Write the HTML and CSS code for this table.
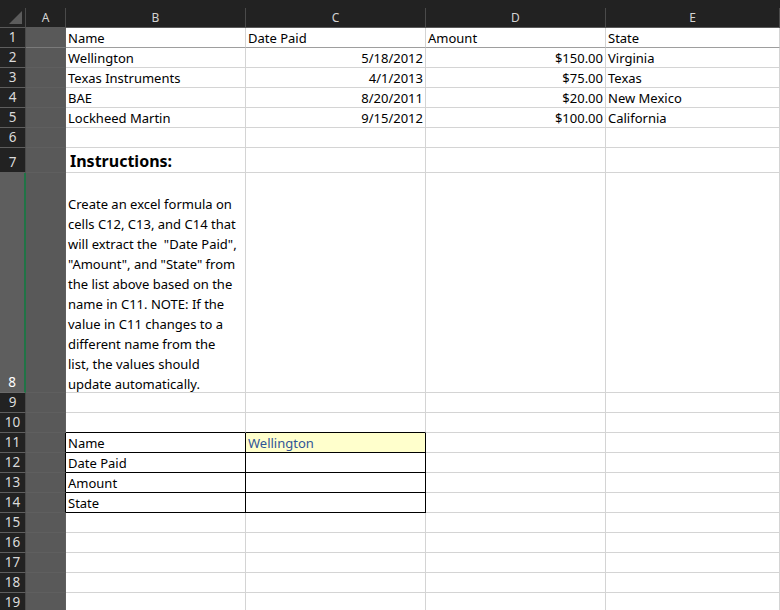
FILE: index.html
```html
<!DOCTYPE html>
<html>
<head>
<meta charset="utf-8">
<link rel="stylesheet" href="styles.css">
</head>
<body>
<div class="topbar"></div>
<div class="grid">
  <div class="corner"><span class="tri"></span></div>
  <div class="ch">A</div><div class="ch">B</div><div class="ch">C</div><div class="ch">D</div><div class="ch">E</div>

  <div class="rh">1</div><div class="ca fz"></div><div class="c fz">Name</div><div class="c fz">Date Paid</div><div class="c fz">Amount</div><div class="c fz">State</div>
  <div class="rh">2</div><div class="ca"></div><div class="c">Wellington</div><div class="c r">5/18/2012</div><div class="c r">$150.00</div><div class="c">Virginia</div>
  <div class="rh">3</div><div class="ca"></div><div class="c">Texas Instruments</div><div class="c r">4/1/2013</div><div class="c r">$75.00</div><div class="c">Texas</div>
  <div class="rh">4</div><div class="ca"></div><div class="c">BAE</div><div class="c r">8/20/2011</div><div class="c r">$20.00</div><div class="c">New Mexico</div>
  <div class="rh">5</div><div class="ca"></div><div class="c">Lockheed Martin</div><div class="c r">9/15/2012</div><div class="c r">$100.00</div><div class="c">California</div>
  <div class="rh">6</div><div class="ca"></div><div class="c"></div><div class="c"></div><div class="c"></div><div class="c"></div>
  <div class="rh">7</div><div class="ca"></div><div class="c head">Instructions:</div><div class="c"></div><div class="c"></div><div class="c"></div>
  <div class="rh sel">8</div><div class="ca"></div>
  <div class="c wrap">Create an excel formula on<br>cells C12, C13, and C14 that<br>will extract the&nbsp; "Date Paid",<br>"Amount", and "State" from<br>the list above based on the<br>name in C11. NOTE: If the<br>value in C11 changes to a<br>different name from the<br>list, the values should<br>update automatically.</div>
  <div class="c"></div><div class="c"></div><div class="c"></div>
  <div class="rh">9</div><div class="ca"></div><div class="c"></div><div class="c"></div><div class="c"></div><div class="c"></div>
  <div class="rh">10</div><div class="ca"></div><div class="c kb"></div><div class="c kb"></div><div class="c"></div><div class="c"></div>
  <div class="rh">11</div><div class="ca kr"></div><div class="c k">Name</div><div class="c k yel">Wellington</div><div class="c"></div><div class="c"></div>
  <div class="rh">12</div><div class="ca kr"></div><div class="c k">Date Paid</div><div class="c k"></div><div class="c"></div><div class="c"></div>
  <div class="rh">13</div><div class="ca kr"></div><div class="c k">Amount</div><div class="c k"></div><div class="c"></div><div class="c"></div>
  <div class="rh">14</div><div class="ca kr"></div><div class="c k">State</div><div class="c k"></div><div class="c"></div><div class="c"></div>
  <div class="rh">15</div><div class="ca"></div><div class="c"></div><div class="c"></div><div class="c"></div><div class="c"></div>
  <div class="rh">16</div><div class="ca"></div><div class="c"></div><div class="c"></div><div class="c"></div><div class="c"></div>
  <div class="rh">17</div><div class="ca"></div><div class="c"></div><div class="c"></div><div class="c"></div><div class="c"></div>
  <div class="rh">18</div><div class="ca"></div><div class="c"></div><div class="c"></div><div class="c"></div><div class="c"></div>
  <div class="rh">19</div><div class="ca"></div><div class="c"></div><div class="c"></div><div class="c"></div><div class="c"></div>
</div>
</body>
</html>
```

FILE: styles.css
```css
html, body {
  margin: 0;
  padding: 0;
  background: #ffffff;
  overflow: hidden;
  width: 780px;
  height: 610px;
}
body {
  font-family: "Noto Sans", "Open Sans", sans-serif;
  font-size: 13px;
  color: #000;
}
.topbar {
  height: 8px;
  background: #222222;
}
.grid {
  display: grid;
  grid-template-columns: 26px 40px 180px 180px 180px 174px;
  grid-template-rows: 20px repeat(6, 20px) 25px 220px repeat(11, 20px);
}
.grid > div {
  box-sizing: border-box;
  overflow: hidden;
  white-space: nowrap;
}
.corner {
  background: #222222;
  border-right: 1px solid #4a4a4a;
  border-bottom: 1px solid #5a5a5a;
  position: relative;
}
.tri {
  position: absolute;
  right: 3px;
  bottom: 3px;
  width: 0;
  height: 0;
  border-left: 13px solid transparent;
  border-bottom: 13px solid #5c5c5c;
}
.ch {
  background: #222222;
  color: #d4d4d4;
  border-right: 1px solid #4a4a4a;
  border-bottom: 1px solid #5a5a5a;
  display: flex;
  align-items: center;
  justify-content: center;
  font-size: 12px;
  padding-bottom: 1px;
}
.rh {
  background: #222222;
  color: #dadada;
  border-right: 1px solid #4a4a4a;
  border-bottom: 1px solid #5e5e5e;
  display: flex;
  align-items: flex-end;
  justify-content: center;
  padding-bottom: 0;
  font-size: 13.5px;
  line-height: 19px;
}
.rh.sel {
  background: #5e5e5e;
  color: #ffffff;
  border-right: 2px solid #217346;
  border-bottom: 1px solid #6a6a6a;
}
.ca {
  background: #595959;
  border-right: 1px solid #5f5f5f;
  border-bottom: 1px solid #5f5f5f;
}
.c {
  border-right: 1px solid #d4d4d4;
  border-bottom: 1px solid #d4d4d4;
  padding: 0 2px 0 2px;
  display: flex;
  align-items: flex-end;
  line-height: 17px;
}
.c.r {
  justify-content: flex-end;
}
.fz {
  border-bottom: 1px solid #9e9e9e;
}
.ca.fz {
  border-bottom: 1px solid #7a7a7a;
}
.head {
  font-weight: bold;
  font-size: 16px;
  padding-left: 4px;
  padding-bottom: 0;
  line-height: 21px;
}
.wrap {
  white-space: normal;
  display: block;
  padding-top: 21px;
  line-height: 20px;
  font-size: 13px;
}
.kb {
  border-bottom: 1px solid #000;
}
.kr {
  border-right: 1px solid #000;
}
.k {
  border-right: 1px solid #000;
  border-bottom: 1px solid #000;
}
.yel {
  background: #ffffcc;
  color: #2f5597;
}
```
